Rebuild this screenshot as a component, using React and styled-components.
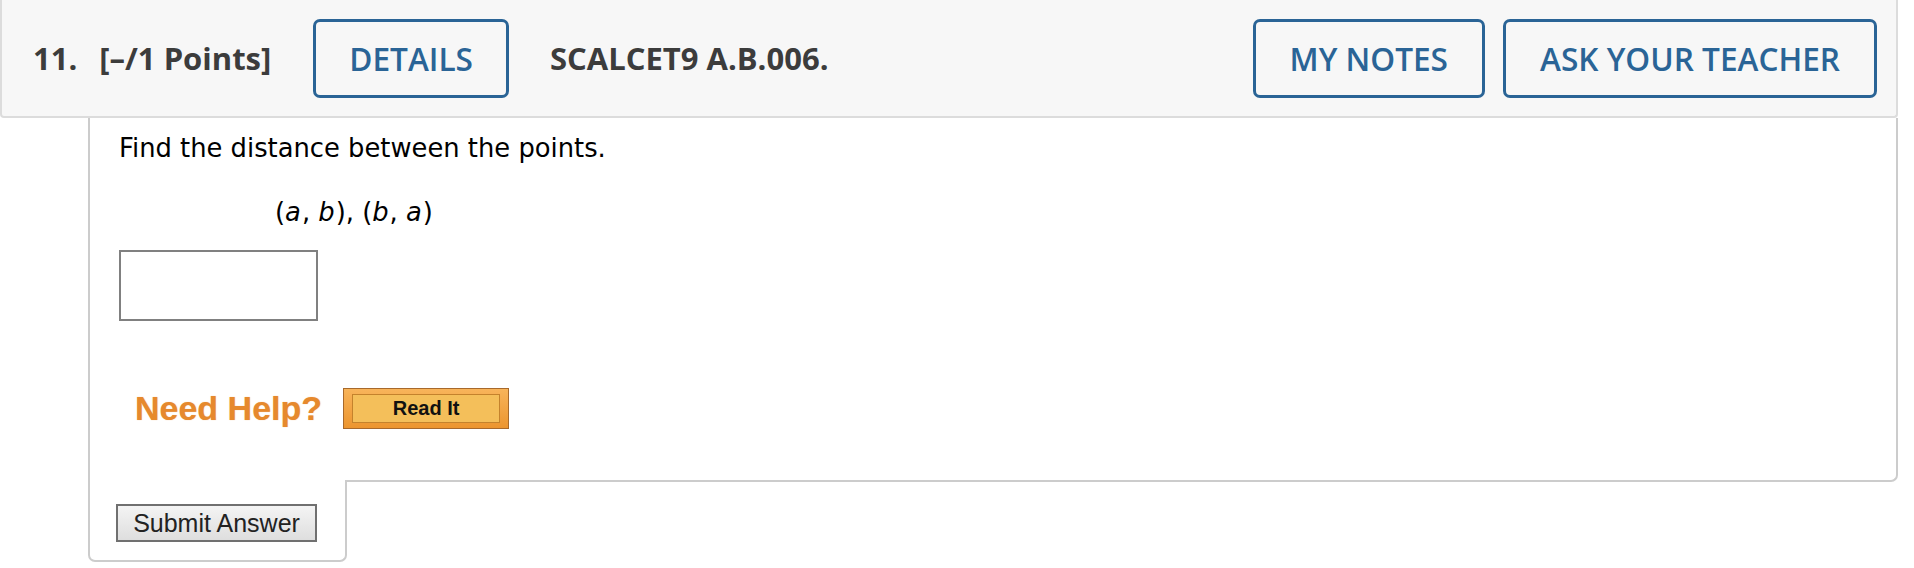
import React from 'react'
import styled, {createGlobalStyle} from 'styled-components'

const GlobalStyle = createGlobalStyle`
	body{
		margin: 0;
		background: #fff;
		font-family: "Open Sans", "Liberation Sans", sans-serif;
	}
`

const Page = styled.div`
	width: 1898px;
`

const Header = styled.div`
	height: 116px;
	display: flex;
	align-items: center;
	background: #f7f7f7;
	border: 2px solid #dcdcdc;
	border-top: none;
	border-radius: 0 0 4px 4px;
	padding: 0 19px 0 31px;
	box-sizing: content-box;
	color: #3c3c3c;
	h2{
		margin: 0;
		font-size: 31px;
		font-weight: 700;
		white-space: nowrap;
	}
	.points{
		margin-left: 22px;
	}
	.code{
		margin-left: 41px;
	}
	.spacer{
		flex: 1;
	}
`

const OutlineButton = styled.button`
	height: 79px;
	box-sizing: border-box;
	margin-left: ${props => props.$gap || 0}px;
	padding: 0 ${props => props.$pad || 34}px;
	background: transparent;
	border: 3px solid #2a6496;
	border-radius: 7px;
	color: #2a6496;
	font-family: "Open Sans", "Liberation Sans", sans-serif;
	font-size: 31.6px;
	font-weight: 600;
	text-transform: uppercase;
	white-space: nowrap;
`

const Panel = styled.div`
	margin-left: 88px;
	border: 2px solid #cccccc;
	border-top: none;
	border-radius: 0 0 7px 0;
	padding: 15px 29px 51px;
	font-family: "DejaVu Sans", Verdana, sans-serif;
	font-size: 25.8px;
	color: #000;
	p{
		margin: 0;
	}
`

const MathLine = styled.p`
	&&{
		margin-top: 34px;
		padding-left: 156px;
	}
	i{
		font-style: oblique;
		letter-spacing: 1px;
	}
`

const AnswerBox = styled.input`
	display: block;
	margin-top: 23px;
	width: 199px;
	height: 71px;
	box-sizing: border-box;
	border: 2px solid #808080;
	background: #fff;
	outline: none;
`

const HelpRow = styled.div`
	display: flex;
	align-items: center;
	gap: 21px;
	margin-top: 67px;
	padding-left: 16px;
`

const HelpLabel = styled.span`
	font-family: "Liberation Sans", Arial, sans-serif;
	font-weight: 700;
	font-size: 34px;
	color: #e6892d;
	text-shadow: 0 0 1px rgba(230, 137, 45, 0.6);
`

const ReadIt = styled.button`
	width: 166px;
	height: 41px;
	box-sizing: border-box;
	padding: 5px 8px;
	border: 1px solid #a8692b;
	background: linear-gradient(#f8b45a, #ec952f);
	display: flex;
	span{
		flex: 1;
		display: flex;
		align-items: center;
		justify-content: center;
		border: 1px solid #c4822c;
		background: #f4bf5a;
		font-family: "Liberation Sans", Arial, sans-serif;
		font-weight: 700;
		font-size: 20px;
		color: #111;
	}
`

const SubmitTab = styled.div`
	width: 229px;
	box-sizing: content-box;
	margin-left: 88px;
	margin-top: -2px;
	border: 2px solid #cccccc;
	border-top: none;
	border-radius: 0 0 7px 7px;
	background: #fff;
	padding: 24px 0 18px 26px;
	position: relative;
`

const SubmitButton = styled.button`
	display: block;
	width: 201px;
	height: 38px;
	box-sizing: border-box;
	padding: 0;
	border: 2px solid #707070;
	background: linear-gradient(#f4f4f4, #dedede);
	font-family: "Liberation Sans", Arial, sans-serif;
	font-size: 25px;
	color: #222;
`

export default function App(){
	return <>
		<GlobalStyle />
		<Page>
			<Header>
				<h2>11.</h2>
				<h2 className='points'>[–/1 Points]</h2>
				<OutlineButton $gap={42} $pad={33}>Details</OutlineButton>
				<h2 className='code'>SCALCET9 A.B.006.</h2>
				<div className='spacer' />
				<OutlineButton>My Notes</OutlineButton>
				<OutlineButton $gap={18}>Ask Your Teacher</OutlineButton>
			</Header>
			<Panel>
				<p>Find the distance between the points.</p>
				<MathLine>(<i>a</i>, <i>b</i>), (<i>b</i>, <i>a</i>)</MathLine>
				<AnswerBox type='text' />
				<HelpRow>
					<HelpLabel>Need Help?</HelpLabel>
					<ReadIt><span>Read It</span></ReadIt>
				</HelpRow>
			</Panel>
			<SubmitTab>
				<SubmitButton>Submit Answer</SubmitButton>
			</SubmitTab>
		</Page>
	</>
}
